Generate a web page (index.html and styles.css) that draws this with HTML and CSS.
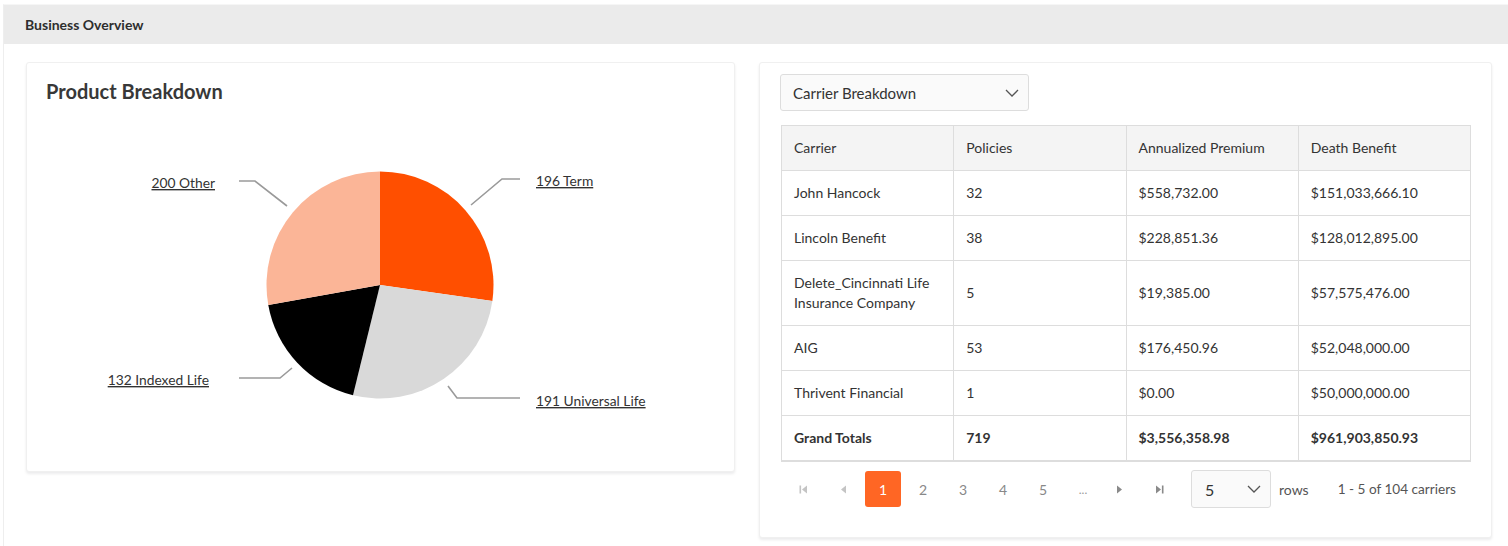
FILE: index.html
```html
<!DOCTYPE html>
<html>
<head>
<meta charset="utf-8">
<link rel="stylesheet" href="styles.css">
</head>
<body>
<div class="page">
  <div class="page-header">Business Overview</div>
  <div class="content">
    <section class="card card-product">
      <div class="card-head"><h2 class="card-title">Product Breakdown</h2></div>
      <svg class="pie" width="707" height="320" viewBox="27 103 707 320" xmlns="http://www.w3.org/2000/svg">
        <path d="M380 285 L380 171.5 A113.5 113.5 0 0 1 492.36 301.06 Z" fill="#ff4f00"/>
        <path d="M380 285 L492.36 301.06 A113.5 113.5 0 0 1 352.99 395.24 Z" fill="#d9d9d9"/>
        <path d="M380 285 L352.99 395.24 A113.5 113.5 0 0 1 268.27 304.98 Z" fill="#000000"/>
        <path d="M380 285 L268.27 304.98 A113.5 113.5 0 0 1 380 171.5 Z" fill="#fbb597"/>
        <g fill="none" stroke="#9a9a9a" stroke-width="1.6">
          <polyline points="471,205 502,179 520,179"/>
          <polyline points="239,181 255,181 287,206"/>
          <polyline points="239,378 280,378 292,368"/>
          <polyline points="448,386 457,398 520,398"/>
        </g>
        <g class="pie-label">
          <text x="536" y="186">196 Term</text>
          <text x="215" y="188" text-anchor="end">200 Other</text>
          <text x="209" y="385" text-anchor="end">132 Indexed Life</text>
          <text x="536" y="406">191 Universal Life</text>
        </g>
      </svg>
    </section>
    <section class="card card-carrier">
      <div class="select select-wide">
        <span>Carrier Breakdown</span>
        <svg class="chev" width="14" height="8" viewBox="0 0 14 8"><polyline points="1,1 7,7 13,1" fill="none" stroke="#555" stroke-width="1.3"/></svg>
      </div>
      <table class="grid">
        <thead>
          <tr><th>Carrier</th><th>Policies</th><th>Annualized Premium</th><th>Death Benefit</th></tr>
        </thead>
        <tbody>
          <tr><td>John Hancock</td><td>32</td><td>$558,732.00</td><td>$151,033,666.10</td></tr>
          <tr><td>Lincoln Benefit</td><td>38</td><td>$228,851.36</td><td>$128,012,895.00</td></tr>
          <tr><td>Delete_Cincinnati Life Insurance Company</td><td>5</td><td>$19,385.00</td><td>$57,575,476.00</td></tr>
          <tr><td>AIG</td><td>53</td><td>$176,450.96</td><td>$52,048,000.00</td></tr>
          <tr><td>Thrivent Financial</td><td>1</td><td>$0.00</td><td>$50,000,000.00</td></tr>
          <tr class="total"><td>Grand Totals</td><td>719</td><td>$3,556,358.98</td><td>$961,903,850.93</td></tr>
        </tbody>
      </table>
      <div class="pager">
        <span class="pg pg-off"><svg width="9" height="9" viewBox="0 0 9 9"><rect x="0.5" y="0.5" width="1.6" height="8" fill="#c4c4c4"/><polygon points="8,0.5 8,8.5 3,4.5" fill="#c4c4c4"/></svg></span>
        <span class="pg pg-off"><svg width="9" height="9" viewBox="0 0 9 9"><polygon points="7,0.5 7,8.5 2,4.5" fill="#c4c4c4"/></svg></span>
        <span class="pg pg-active">1</span>
        <span class="pg">2</span>
        <span class="pg">3</span>
        <span class="pg">4</span>
        <span class="pg">5</span>
        <span class="pg pg-dots">...</span>
        <span class="pg pg-next"><svg width="9" height="9" viewBox="0 0 9 9"><polygon points="2,0.5 2,8.5 7,4.5" fill="#8a8a8a"/></svg></span>
        <span class="pg"><svg width="9" height="9" viewBox="0 0 9 9"><polygon points="1,0.5 1,8.5 6,4.5" fill="#8a8a8a"/><rect x="6.9" y="0.5" width="1.6" height="8" fill="#8a8a8a"/></svg></span>
        <div class="select select-small">
          <span>5</span>
          <svg class="chev" width="14" height="8" viewBox="0 0 14 8"><polyline points="1,1 7,7 13,1" fill="none" stroke="#555" stroke-width="1.3"/></svg>
        </div>
        <span class="rows">rows</span>
        <span class="summary">1 - 5 of 104 carriers</span>
      </div>
    </section>
  </div>
</div>
</body>
</html>
```

FILE: styles.css
```css
* { box-sizing: border-box; }
html, body { margin: 0; padding: 0; background: #ffffff; }
body {
  font-family: Lato, "Open Sans", "Liberation Sans", sans-serif;
  color: #333333;
}
.page {
  margin: 4px 0 0 3px;
  border-left: 1px solid #eeeeee;
  border-top: 1px solid #f6f6f6;
  min-height: 560px;
}
.page-header {
  background: #ebebeb;
  height: 39px;
  line-height: 39px;
  padding-left: 21px;
  font-size: 14px;
  font-weight: 700;
  color: #2e2e2e;
}
.content {
  display: flex;
  align-items: flex-start;
  gap: 24px;
  padding: 18px 16px 0 22px;
}
.card {
  background: #ffffff;
  border: 1px solid #f0f0f0;
  border-radius: 3px;
  box-shadow: 0 2px 3px rgba(0, 0, 30, 0.08);
}
.card-product {
  flex: 0 0 709px;
  height: 410px;
  overflow: hidden;
}
.card-head { padding: 16px 19px 0 19px; }
.card-title {
  margin: 0;
  font-size: 20px;
  line-height: 24px;
  font-weight: 700;
  color: #383838;
}
.pie { display: block; }
.pie-label text {
  font-family: Lato, "Open Sans", sans-serif;
  font-size: 13.8px;
  fill: #333333;
  text-decoration: underline;
}
.card-carrier {
  flex: 1 1 auto;
  padding: 11px 20px 29px 20px;
}
.select {
  display: flex;
  align-items: center;
  justify-content: space-between;
  background: #fafafa;
  border: 1px solid #dddddd;
  border-radius: 3px;
  color: #333333;
}
.select-wide {
  width: 249px;
  height: 37px;
  padding: 0 9px 0 12px;
  font-size: 15px;
}
.chev { display: block; }
.grid {
  width: calc(100% - 1px);
  margin: 14px 0 0 1px;
  border-collapse: collapse;
  table-layout: fixed;
  font-size: 14px;
  color: #333333;
}
.grid th, .grid td {
  border: 1px solid #dddddd;
  padding: 12px 12px;
  line-height: 20px;
  text-align: left;
  vertical-align: middle;
}
.grid th {
  background: #f4f4f4;
  font-weight: 400;
}
.grid tbody tr:last-child td { border-bottom: 2px solid #dddddd; }
.grid .total td { font-weight: 700; }
.pager {
  display: flex;
  align-items: center;
  padding: 8px 0 0 5px;
  font-size: 14px;
}
.pg {
  width: 36px;
  height: 36px;
  margin-right: 4px;
  display: flex;
  align-items: center;
  justify-content: center;
  color: #888888;
  border-radius: 3px;
}
.pg svg { display: block; }
.pg-next { margin-left: -4px; }
.pg-active {
  background: #ff6624;
  color: #ffffff;
}
.pg-dots { color: #999999; font-size: 12px; }
.select-small {
  width: 80px;
  height: 38px;
  margin-left: 10px;
  padding: 0 9px 0 13px;
  font-size: 16px;
}
.rows {
  margin-left: 8px;
  color: #555555;
}
.summary {
  margin-left: 29px;
  font-size: 13.6px;
  color: #555555;
}
```
